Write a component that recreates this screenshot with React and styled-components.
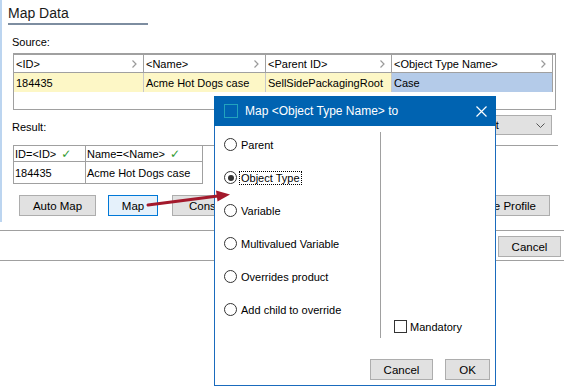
import styled, { createGlobalStyle } from 'styled-components'

const GlobalStyle = createGlobalStyle`
  *, *::before, *::after { box-sizing: border-box; }
  html, body { margin: 0; padding: 0; background: #fff; }
  body {
    font-family: "Liberation Sans", Arial, sans-serif;
    font-size: 11px;
    color: #000;
  }
`

const Screen = styled.div`
  position: relative;
  width: 564px;
  height: 388px;
  overflow: hidden;
  background: #fff;
`

const MainPanel = styled.div`
  height: 222px;
  border-left: 2px solid #bcd5f0;
  padding-left: 6px;
`

const Title = styled.div`
  width: 140px;
  height: 25px;
  padding-top: 4px;
  line-height: 19px;
  font-size: 14px;
  color: #1a1a1a;
  border-bottom: 2px solid #7d8da0;
`

const SectionLabel = styled.div`
  margin-top: ${p => p.$top || 0}px;
  padding-left: 4px;
  line-height: 14px;
`

const SourceGrid = styled.div`
  margin: 4px 0 0 5px;
  width: 543px;
  height: 57px;
  border: 1px solid #a0a0a0;
  border-top-width: 2px;
  display: grid;
  grid-template-columns: 130px 122px 126px 161px;
  grid-template-rows: 18px 19px;
  align-content: start;
`

const HeadCell = styled.div`
  display: flex;
  align-items: center;
  justify-content: space-between;
  padding: 0 6px 0 2px;
  border-right: 1px solid #a0a0a0;
  border-bottom: 1px solid #a0a0a0;
  white-space: nowrap;
`

const DataCell = styled.div`
  display: flex;
  align-items: center;
  padding-left: 2px;
  background: ${p => (p.$selected ? '#b4cbe9' : '#fdf7c6')};
  border-right: 1px solid ${p => (p.$selected ? '#a0a0a0' : '#c8c8c8')};
  white-space: nowrap;
`

const ResultHeader = styled.div`
  margin-top: 5px;
  width: 544px;
  height: 20px;
  display: flex;
  align-items: center;
  justify-content: space-between;
`

const ResultLabel = styled.span`
  padding: 4px 0 0 4px;
`

const Combo = styled.div`
  width: 100px;
  height: 20px;
  background: #e1e1e1;
  border: 1px solid #adadad;
  display: flex;
  align-items: center;
  justify-content: space-between;
  padding: 0 6px 0 8px;
`

const ResultBox = styled.div`
  margin: 10px 0 0 5px;
  width: 545px;
  height: 45px;
  border-top: 1px solid #a0a0a0;
`

const ResultTable = styled.div`
  display: grid;
  width: 190px;
  grid-template-columns: 72px 117px;
  grid-template-rows: 16px 22px;
  border-left: 1px solid #a0a0a0;
`

const ResultCell = styled.div`
  display: flex;
  align-items: center;
  gap: 5px;
  padding-left: 1px;
  border-right: 1px solid #a0a0a0;
  border-bottom: 1px solid #a0a0a0;
  white-space: nowrap;
`

const Check = styled.span`
  color: #2f9a2f;
  font-family: "DejaVu Sans", sans-serif;
  font-size: 12px;
  line-height: 12px;
`

const ButtonRow = styled.div`
  margin-top: 5px;
  width: 542px;
  display: flex;
  padding-left: 11px;
`

const Button = styled.button`
  height: 21px;
  width: ${p => p.$w}px;
  margin-left: ${p => p.$ml || 0}px;
  padding: 0;
  font: inherit;
  font-size: 11.5px;
  color: #000;
  background: ${p => (p.$focused ? '#e5f1fb' : '#e1e1e1')};
  border: 1px solid ${p => (p.$focused ? '#0078d7' : '#adadad')};
  white-space: nowrap;
  overflow: hidden;
  flex-shrink: 0;
`

const PushRight = styled.div`
  margin-left: auto;
  display: flex;
`

const Footer = styled.div`
  margin-top: 8px;
  height: 31px;
  border-top: 1px solid #a0a0a0;
  border-bottom: 1px solid #a0a0a0;
  display: flex;
  justify-content: flex-end;
  padding: 5px 3px 0 0;
`

const Dialog = styled.div`
  position: absolute;
  left: 214px;
  top: 96px;
  width: 282px;
  height: 290px;
  background: #fff;
  border: 1px solid #1a6bbd;
  border-top: none;
  display: flex;
  flex-direction: column;
`

const TitleBar = styled.div`
  height: 30px;
  margin: 0 -1px;
  background: #0063b1;
  color: #fff;
  display: flex;
  align-items: center;
  padding: 0 9px 0 10px;
  font-size: 12px;
`

const TitleIcon = styled.span`
  width: 14px;
  height: 14px;
  border: 1.5px solid #22a3bd;
  margin-right: 7px;
`

const TitleText = styled.span`
  flex: 1;
`

const DialogBody = styled.div`
  margin-top: 6px;
  height: 206px;
  display: flex;
`

const OptionList = styled.div`
  width: 166px;
  border-right: 1px solid #a0a0a0;
  padding-left: 9px;
  display: flex;
  flex-direction: column;
  gap: 6px;
`

const Option = styled.div`
  height: 27px;
  display: flex;
  align-items: center;
  gap: 3px;
  margin-top: ${p => (p.$first ? -1 : 0)}px;
`

const Radio = styled.span`
  position: relative;
  width: 13px;
  height: 13px;
  border: 1px solid #333;
  border-radius: 50%;
  background: #fff;
  flex-shrink: 0;
  &::after {
    content: '';
    display: ${p => (p.$checked ? 'block' : 'none')};
    position: absolute;
    left: 2.5px;
    top: 2.5px;
    width: 6px;
    height: 6px;
    border-radius: 50%;
    background: #333;
  }
`

const OptionText = styled.span`
  padding: 0 1px;
  line-height: 12px;
  outline: ${p => (p.$focused ? '1px dotted #000' : 'none')};
`

const SideCol = styled.div`
  flex: 1;
  display: flex;
  flex-direction: column;
  justify-content: flex-end;
  padding: 0 0 5px 13px;
`

const CheckRow = styled.div`
  display: flex;
  align-items: center;
  gap: 3px;
`

const Box = styled.span`
  width: 13px;
  height: 13px;
  border: 1px solid #333;
  background: #fff;
`

const DialogButtons = styled.div`
  margin-top: 21px;
  display: flex;
  justify-content: flex-end;
  gap: 12px;
  padding-right: 5px;
`

const Overlay = styled.svg`
  position: absolute;
  left: 0;
  top: 0;
  pointer-events: none;
`

function Chevron() {
  return (
    <svg width="5" height="8" viewBox="0 0 5 8">
      <polyline points="0.5,0.5 4,4 0.5,7.5" fill="none" stroke="#9a9a9a" strokeWidth="1.2" />
    </svg>
  )
}

const headers = ['<ID>', '<Name>', '<Parent ID>', '<Object Type Name>']
const row = ['184435', 'Acme Hot Dogs case', 'SellSidePackagingRoot', 'Case']
const options = ['Parent', 'Object Type', 'Variable', 'Multivalued Variable', 'Overrides product', 'Add child to override']

export default function App() {
  return (
    <Screen>
      <GlobalStyle />
      <MainPanel>
        <Title>Map Data</Title>
        <SectionLabel $top={10}>Source:</SectionLabel>
        <SourceGrid>
          {headers.map(h => (
            <HeadCell key={h}>
              {h}
              <Chevron />
            </HeadCell>
          ))}
          {row.map((v, i) => (
            <DataCell key={v} $selected={i === 3}>{v}</DataCell>
          ))}
        </SourceGrid>
        <ResultHeader>
          <ResultLabel>Result:</ResultLabel>
          <Combo>
            Product
            <svg width="9" height="5" viewBox="0 0 9 5">
              <polyline points="0.5,0.5 4.5,4.5 8.5,0.5" fill="none" stroke="#555" strokeWidth="1" />
            </svg>
          </Combo>
        </ResultHeader>
        <ResultBox>
          <ResultTable>
            <ResultCell>ID=&lt;ID&gt; <Check>✓</Check></ResultCell>
            <ResultCell>Name=&lt;Name&gt; <Check>✓</Check></ResultCell>
            <ResultCell>184435</ResultCell>
            <ResultCell>Acme Hot Dogs case</ResultCell>
          </ResultTable>
        </ResultBox>
        <ButtonRow>
          <Button $w={77}>Auto Map</Button>
          <Button $w={50} $ml={12} $focused>Map</Button>
          <Button $w={80} $ml={14}>Constant</Button>
          <PushRight>
            <Button $w={90}>Save Profile</Button>
          </PushRight>
        </ButtonRow>
      </MainPanel>
      <Footer>
        <Button $w={63}>Cancel</Button>
      </Footer>

      <Dialog>
        <TitleBar>
          <TitleIcon />
          <TitleText>Map &lt;Object Type Name&gt; to</TitleText>
          <svg width="11" height="11" viewBox="0 0 11 11">
            <path d="M0.5 0.5 L10.5 10.5 M10.5 0.5 L0.5 10.5" stroke="#fff" strokeWidth="1.2" />
          </svg>
        </TitleBar>
        <DialogBody>
          <OptionList>
            {options.map((o, i) => (
              <Option key={o} $first={i === 0}>
                <Radio $checked={i === 1} />
                <OptionText $focused={i === 1}>{o}</OptionText>
              </Option>
            ))}
          </OptionList>
          <SideCol>
            <CheckRow>
              <Box />
              <span>Mandatory</span>
            </CheckRow>
          </SideCol>
        </DialogBody>
        <DialogButtons>
          <Button $w={63}>Cancel</Button>
          <Button $w={45}>OK</Button>
        </DialogButtons>
      </Dialog>

      <Overlay width="564" height="388" viewBox="0 0 564 388">
        <line x1="148" y1="205" x2="218" y2="196" stroke="#a3192c" strokeWidth="3" strokeLinecap="round" />
        <polygon points="230,194.5 216,190.5 217.5,201.5" fill="#a3192c" />
      </Overlay>
    </Screen>
  )
}
